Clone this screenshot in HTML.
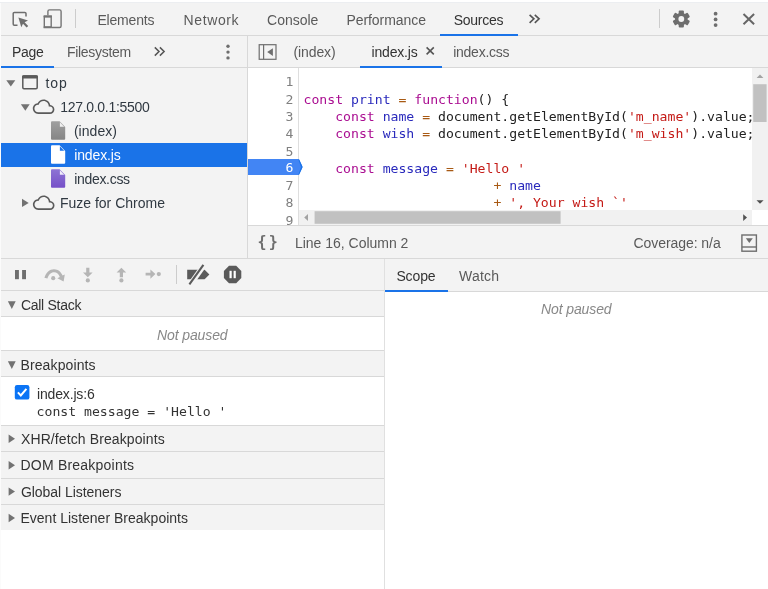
<!DOCTYPE html>
<html lang="en">
<head>
<meta charset="utf-8">
<title>DevTools - Sources</title>
<style>
html,body{margin:0;padding:0;}
body{width:768px;height:589px;position:relative;overflow:hidden;background:#fff;font-family:"Liberation Sans",sans-serif;font-size:14px;color:#333;}
.a{position:absolute;}
.bg{background:#f3f3f3;}
.t{position:absolute;white-space:nowrap;line-height:20px;height:20px;font-size:14px;}
.m{font-family:"DejaVu Sans Mono","Liberation Mono",monospace;}
.hl{position:absolute;left:0;height:1px;background:#d8d8d8;}
.vl{position:absolute;width:1px;background:#d8d8d8;}
svg{position:absolute;overflow:visible;}
.code{position:absolute;left:304.2px;white-space:pre;font-family:"DejaVu Sans Mono","Liberation Mono",monospace;font-size:13.15px;line-height:17px;height:17px;color:#222;}
.ln{position:absolute;left:248px;width:45.5px;text-align:right;font-family:"DejaVu Sans Mono","Liberation Mono",monospace;font-size:13.15px;line-height:17px;height:17px;color:#808080;}
.k{color:#aa0d91;}
.d{color:#2a2abc;}
.o{color:#a85a14;}
.s{color:#c41a16;}
</style>
</head>
<body>
<div id="root" style="position:absolute;left:0;top:0;width:768px;height:589px;will-change:transform;">
<!-- top toolbar -->
<div class="a bg" style="left:0;top:2px;width:768px;height:33px;"></div>
<div class="hl" style="top:35px;width:768px;"></div>
<!-- sources sub toolbar -->
<div class="a bg" style="left:0;top:36px;width:768px;height:31px;"></div>
<div class="hl" style="top:67px;width:768px;"></div>
<!-- navigator -->
<div class="a bg" style="left:0;top:68px;width:247px;height:190px;"></div>
<div class="vl" style="left:247px;top:36px;height:222px;"></div>
<!-- selected row -->
<div class="a" style="left:0;top:143px;width:247px;height:24px;background:#1a73e8;"></div>
<!-- editor -->
<div class="a" style="left:248px;top:68px;width:520px;height:158px;background:#fff;overflow:hidden;">
</div>

<div class="vl" style="left:298px;top:68px;height:158px;background:#dedede;"></div>
<div class="a" style="left:248px;top:68px;width:504px;height:142px;overflow:hidden;">
<svg style="left:0;top:91.2px;" width="56" height="16" viewBox="0 0 56 16"><path d="M0 0H50.2Q50.9 0 51.3 0.7L54.3 7.2Q54.6 8 54.3 8.8L51.3 15.3Q50.9 16 50.2 16H0Z" fill="#4285f4"/><path d="M50.2 0Q50.9 0 51.3 0.7L54.3 7.2Q54.6 8 54.3 8.8L51.3 15.3Q50.9 16 50.2 16L53 8Z" fill="#1a73e8"/></svg>
<div class="ln" style="left:0;top:5.35px;color:#808080;">1</div>
<div class="ln" style="left:0;top:22.65px;color:#808080;">2</div>
<div class="ln" style="left:0;top:39.95px;color:#808080;">3</div>
<div class="ln" style="left:0;top:57.25px;color:#808080;">4</div>
<div class="ln" style="left:0;top:74.55px;color:#808080;">5</div>
<div class="ln" style="left:0;top:90.75px;color:#fff;">6</div>
<div class="ln" style="left:0;top:109.15px;color:#808080;">7</div>
<div class="ln" style="left:0;top:126.45px;color:#808080;">8</div>
<div class="code" style="left:55.5px;top:22.65px;"><span class="k">const</span> <span class="d">print</span> <span class="o">=</span> <span class="k">function</span>() {</div>
<div class="code" style="left:55.5px;top:39.95px;">    <span class="k">const</span> <span class="d">name</span> <span class="o">=</span> document.getElementById(<span class="s">'m_name'</span>).value;</div>
<div class="code" style="left:55.5px;top:57.25px;">    <span class="k">const</span> <span class="d">wish</span> <span class="o">=</span> document.getElementById(<span class="s">'m_wish'</span>).value;</div>
<div class="code" style="left:55.5px;top:91.85px;">    <span class="k">const</span> <span class="d">message</span> <span class="o">=</span> <span class="s">'Hello '</span></div>
<div class="code" style="left:55.5px;top:109.15px;">                        <span class="o">+</span> <span class="d">name</span></div>
<div class="code" style="left:55.5px;top:126.45px;">                        <span class="o">+</span> <span class="s">', Your wish `'</span></div>
</div>
<div class="a" style="left:248px;top:68px;width:50px;height:157px;overflow:hidden;"><div class="ln" style="left:0;top:143.75px;">9</div></div>
<!-- status bar -->
<div class="a bg" style="left:248px;top:226px;width:520px;height:32px;"></div>
<div class="hl" style="left:248px;top:225px;width:520px;"></div>
<div class="hl" style="top:258px;width:768px;"></div>
<!-- debugger toolbar -->
<div class="a bg" style="left:0;top:259px;width:384px;height:31px;"></div>
<div class="hl" style="top:290px;width:384px;"></div>
<!-- call stack header -->
<div class="a bg" style="left:0;top:291px;width:384px;height:25px;"></div>
<div class="hl" style="top:316px;width:384px;"></div>
<div class="hl" style="top:350px;width:384px;"></div>
<div class="a bg" style="left:0;top:351px;width:384px;height:25px;"></div>
<div class="hl" style="top:376px;width:384px;"></div>
<div class="hl" style="top:425px;width:384px;"></div>
<div class="a bg" style="left:0;top:426px;width:384px;height:104.4px;"></div>
<div class="hl" style="top:451px;width:384px;"></div>
<div class="hl" style="top:478px;width:384px;"></div>
<div class="hl" style="top:504px;width:384px;"></div>

<!-- right pane -->
<div class="vl" style="left:384px;top:259px;height:330px;background:#e0e0e0;"></div>
<div class="a bg" style="left:385px;top:259px;width:383px;height:32px;"></div>
<div class="hl" style="left:385px;top:291px;width:383px;"></div>
<!-- tab underlines -->
<div class="a" style="left:440px;top:34px;width:78px;height:2px;background:#1a73e8;"></div>
<div class="a" style="left:0;top:66px;width:54px;height:2px;background:#1a73e8;"></div>
<div class="a" style="left:360px;top:66px;width:82px;height:2px;background:#1a73e8;"></div>
<div class="a" style="left:385px;top:290px;width:63px;height:2px;background:#1a73e8;"></div>
<div class="a" style="left:0;top:3px;width:1px;height:586px;background:#fbfbfb;"></div>
<div class="a" style="left:0;top:2px;width:768px;height:1px;background:#eceef1;"></div>
<!-- inspect icon -->
<svg style="left:0;top:0;" width="768" height="589" viewBox="0 0 768 589">
<g fill="none" stroke="#6e6e6e" stroke-width="1.5" stroke-linejoin="round">
<path d="M17.5 25.2H14.3Q13.2 25.2 13.2 24.1V13.6Q13.2 12.5 14.3 12.5H24.9Q26 12.5 26 13.6V16.5"/>
</g>
<path d="M18.4 17.6L28 20.6L24.6 22.3L28.2 25.9L26.6 27.4L23 23.8L21.3 27.2Z" fill="#6e6e6e"/>
<!-- device icon -->
<g fill="none" stroke="#757575">
<path d="M47.9 15.3V11.4Q47.9 9.9 49.4 9.9H59.6Q61.1 9.9 61.1 11.4V26Q61.1 27.5 59.6 27.5H52" stroke-width="1.4"/>
<rect x="44.3" y="16.8" width="6.9" height="10.2" stroke-width="1.4"/>
<path d="M43.6 16.3H51.9M43.6 27.4H51.9" stroke-width="1.9"/>
</g>
<!-- separators -->
<rect x="75" y="9" width="1" height="19" fill="#ccc"/>
<rect x="659" y="9" width="1" height="19" fill="#ccc"/>
<!-- top chevrons -->
<path d="M529.6 14.8L533.9 18.8L529.6 22.8M534.8 14.8L539.1 18.8L534.8 22.8" fill="none" stroke="#555" stroke-width="1.6"/>
<!-- gear -->
<g transform="translate(681.3 19)">
<g fill="#6e6e6e">
<rect x="-2.6" y="-8.6" width="5.2" height="17.2" rx="1"/>
<rect x="-2.6" y="-8.6" width="5.2" height="17.2" rx="1" transform="rotate(60)"/>
<rect x="-2.6" y="-8.6" width="5.2" height="17.2" rx="1" transform="rotate(120)"/>
<circle r="6.3"/>
</g>
<circle r="2.9" fill="#f3f3f3"/>
</g>
<!-- kebab top -->
<g fill="#6e6e6e">
<circle cx="715.6" cy="13.7" r="1.9"/><circle cx="715.6" cy="19.4" r="1.9"/><circle cx="715.6" cy="25.1" r="1.9"/>
<circle cx="228" cy="46.3" r="1.7"/><circle cx="228" cy="52.1" r="1.7"/><circle cx="228" cy="57.9" r="1.7"/>
</g>
<!-- close X -->
<path d="M743.5 14L754.1 24.2M754.1 14L743.5 24.2" stroke="#666" stroke-width="2" fill="none"/>
<!-- second row chevrons -->
<path d="M154.8 47.4L159 51.5L154.8 55.6M159.9 47.4L164.1 51.5L159.9 55.6" fill="none" stroke="#555" stroke-width="1.5"/>
<!-- sidebar toggle -->
<g fill="none" stroke="#6e6e6e" stroke-width="1.2">
<rect x="259.2" y="44.7" width="16.8" height="14.6"/>
<path d="M263.6 44.7V59.3"/>
</g>
<path d="M267.2 52.1L272.9 48.2V56Z" fill="#6e6e6e"/>
<!-- tab close -->
<path d="M426.6 47.4L433.8 54.3M433.8 47.4L426.6 54.3" stroke="#555" stroke-width="1.6" fill="none"/>
<!-- tree triangles -->
<g fill="#727272">
<path d="M6.3 80.2H15.3L10.8 86.6Z"/>
<path d="M20.9 104.3H29.7L25.3 110.8Z"/>
<path d="M22 198.7L28.7 202.9L22 207.1Z"/>
<path d="M7.9 301.3H15.7L11.8 309Z"/>
<path d="M7.9 361.3H15.7L11.8 369Z"/>
<path d="M8.6 434.6L15 438.8L8.6 443Z"/>
<path d="M8.6 461L15 465.2L8.6 469.4Z"/>
<path d="M8.6 487.4L15 491.6L8.6 495.8Z"/>
<path d="M8.6 513.8L15 518L8.6 522.2Z"/>
</g>
<!-- frame icon -->
<g>
<rect x="22.8" y="76" width="14.4" height="12.8" rx="1.2" fill="none" stroke="#5a5a5a" stroke-width="1.5"/>
<rect x="22.1" y="75.2" width="15.8" height="3.4" rx="1" fill="#5a5a5a"/>
</g>
<!-- clouds -->
<g fill="#5a5a5a">
<path id="cl" transform="translate(32.8 95.9) scale(0.9)" d="M19.35 10.04C18.67 6.59 15.64 4 12 4 9.11 4 6.6 5.64 5.35 8.04 2.34 8.36 0 10.91 0 14c0 3.31 2.69 6 6 6h13c2.76 0 5-2.24 5-5 0-2.64-2.05-4.78-4.65-4.96zM19 18.2H6c-2.32 0-4.2-1.88-4.2-4.2s1.88-4.2 4.2-4.2h.56C7.27 7.49 9.43 5.8 12 5.8c3.15 0 5.7 2.55 5.7 5.7v.3H19c1.77 0 3.2 1.43 3.2 3.2s-1.43 3.2-3.2 3.2z"/>
<path transform="translate(32.9 191.9) scale(0.9)" d="M19.35 10.04C18.67 6.59 15.64 4 12 4 9.11 4 6.6 5.64 5.35 8.04 2.34 8.36 0 10.91 0 14c0 3.31 2.69 6 6 6h13c2.76 0 5-2.24 5-5 0-2.64-2.05-4.78-4.65-4.96zM19 18.2H6c-2.32 0-4.2-1.88-4.2-4.2s1.88-4.2 4.2-4.2h.56C7.27 7.49 9.43 5.8 12 5.8c3.15 0 5.7 2.55 5.7 5.7v.3H19c1.77 0 3.2 1.43 3.2 3.2s-1.43 3.2-3.2 3.2z"/>
</g>
<!-- file icons -->
<defs>
<linearGradient id="gg" x1="0" y1="0" x2="0" y2="1"><stop offset="0" stop-color="#a0a0a0"/><stop offset="1" stop-color="#858585"/></linearGradient>
<linearGradient id="gp" x1="0" y1="0" x2="0" y2="1"><stop offset="0" stop-color="#8d74d4"/><stop offset="1" stop-color="#7650c8"/></linearGradient>
</defs>
<path d="M52 121.2H59.6L65.2 126.9V138.8Q65.2 139.8 64.2 139.8H52Q51 139.8 51 138.8V122.2Q51 121.2 52 121.2Z" fill="url(#gg)"/>
<path d="M59.9 122.3L64.2 126.7H59.9Z" fill="#f0f0f0"/>
<path d="M52 145.2H59.6L65.2 150.9V162.8Q65.2 163.8 64.2 163.8H52Q51 163.8 51 162.8V146.2Q51 145.2 52 145.2Z" fill="#fff"/>
<path d="M59.9 146.3L64.2 150.7H59.9Z" fill="#1a73e8"/>
<path d="M52 169.2H59.6L65.2 174.9V186.8Q65.2 187.8 64.2 187.8H52Q51 187.8 51 186.8V170.2Q51 169.2 52 169.2Z" fill="url(#gp)"/>
<path d="M59.9 170.3L64.2 174.7H59.9Z" fill="#f0ecfa"/>
<!-- debugger toolbar -->
<g fill="#6e6e6e">
<rect x="15" y="270" width="3.9" height="9.2"/><rect x="22.1" y="270" width="3.9" height="9.2"/>
</g>
<g fill="#b5b5b5">
<!-- step over -->
<path d="M44.4 277.8C46 272.6 49.6 269.2 54 269.2C58.2 269.2 61.2 272 62.6 275.6L64.8 274.6L63.6 281.4L57.4 278.2L59.8 277C58.8 274.2 56.8 272.2 54 272.2C51 272.2 48.6 274.6 47.4 278.6Z"/>
<circle cx="53.2" cy="278.2" r="2.1"/>
<!-- step into -->
<path d="M86.2 267.8H89.4V272.4H92.6L87.8 277.2L83 272.4H86.2Z"/>
<circle cx="87.8" cy="280.4" r="2.1"/>
<!-- step out -->
<path d="M119.8 277.2H123V272.6H126.2L121.4 267.8L116.6 272.6H119.8Z"/>
<circle cx="121.4" cy="280.4" r="2.1"/>
<!-- step -->
<path d="M145.6 272.7H150.4V269.4L155.4 274.1L150.4 278.8V275.5H145.6Z"/>
<circle cx="158.8" cy="274.1" r="2.1"/>
</g>
<rect x="176" y="265" width="1" height="19" fill="#ccc"/>
<!-- deactivate breakpoints -->
<path d="M187.2 269.8H204.6L209.4 274.5L204.6 279.2H187.2Z" fill="#5a5a5a"/>
<path d="M204.4 264.6L190.2 284.6" stroke="#f3f3f3" stroke-width="5.4"/>
<path d="M203.4 264.9L189.4 284.3" stroke="#5a5a5a" stroke-width="2.1"/>
<!-- pause on exceptions -->
<path d="M229 265.8H236.2L241.3 270.9V278.1L236.2 283.2H229L223.9 278.1V270.9Z" fill="#5a5a5a"/>
<rect x="229.5" y="270.8" width="2.2" height="7.4" fill="#fff"/><rect x="233.6" y="270.8" width="2.2" height="7.4" fill="#fff"/>
<!-- checkbox -->
<rect x="14.8" y="385" width="14.6" height="14.6" rx="2.2" fill="#0b74f5"/>
<path d="M17.9 392.4L20.8 395.4L26.4 388.9" fill="none" stroke="#fff" stroke-width="2"/>
<!-- coverage icon -->
<g fill="none" stroke="#6e6e6e" stroke-width="1.4">
<rect x="741.9" y="235" width="14.5" height="16.2"/>
<path d="M741.9 247H756.4"/>
</g>
<path d="M745.8 238.2H752.8L749.3 243Z" fill="#6e6e6e"/>
<!-- scrollbars -->
<rect x="752" y="68" width="16" height="142" fill="#f1f1f1"/>
<rect x="753.2" y="84.2" width="13.4" height="37.8" fill="#c1c1c1"/>
<path d="M756.6 78L760 74.5L763.4 78Z" fill="#a3a3a3"/>
<path d="M756.5 200.2H763.6L760 203.8Z" fill="#505050"/>
<rect x="299" y="210" width="453" height="15" fill="#f1f1f1"/>
<rect x="314.6" y="211.2" width="246" height="12.6" fill="#c1c1c1"/>
<path d="M308 214L304.2 217.5L308 221Z" fill="#a3a3a3"/>
<path d="M743.2 214.2L747 217.6L743.2 221Z" fill="#505050"/>
</svg>

<span class="t" style="left:97.38px;top:9.5px;color:#5a5a5a;letter-spacing:-0.17px;">Elements</span>
<span class="t" style="left:183.60px;top:9.5px;color:#5a5a5a;letter-spacing:0.61px;">Network</span>
<span class="t" style="left:267.11px;top:9.5px;color:#5a5a5a;letter-spacing:-0.03px;">Console</span>
<span class="t" style="left:346.47px;top:9.5px;color:#5a5a5a;letter-spacing:-0.07px;">Performance</span>
<span class="t" style="left:453.77px;top:9.5px;color:#333;letter-spacing:-0.27px;">Sources</span>
<span class="t" style="left:11.92px;top:41.9px;color:#333;letter-spacing:-0.30px;">Page</span>
<span class="t" style="left:66.92px;top:41.9px;color:#5a5a5a;letter-spacing:-0.29px;">Filesystem</span>
<span class="t" style="left:293.47px;top:41.9px;color:#5a5a5a;letter-spacing:-0.10px;">(index)</span>
<span class="t" style="left:371.50px;top:41.9px;color:#333;letter-spacing:-0.18px;">index.js</span>
<span class="t" style="left:453.15px;top:41.9px;color:#5a5a5a;letter-spacing:-0.24px;">index.css</span>
<span class="t" style="left:45.45px;top:73.1px;color:#303942;letter-spacing:0.93px;">top</span>
<span class="t" style="left:60.20px;top:97.1px;color:#303942;letter-spacing:-0.29px;">127.0.0.1:5500</span>
<span class="t" style="left:73.90px;top:121.1px;color:#303942;letter-spacing:0.05px;">(index)</span>
<span class="t" style="left:74.15px;top:144.9px;color:#fff;letter-spacing:-0.11px;">index.js</span>
<span class="t" style="left:74.15px;top:168.9px;color:#303942;letter-spacing:-0.30px;">index.css</span>
<span class="t" style="left:59.92px;top:193.1px;color:#303942;letter-spacing:0.00px;">Fuze for Chrome</span>
<span class="t" style="left:294.92px;top:232.9px;color:#5a5a5a;letter-spacing:-0.01px;">Line 16, Column 2</span>
<span class="t" style="left:633.44px;top:232.9px;color:#5a5a5a;letter-spacing:-0.06px;">Coverage: n/a</span>
<span class="t" style="left:20.96px;top:294.9px;color:#333;letter-spacing:-0.28px;">Call Stack</span>
<span class="t" style="left:157.10px;top:324.9px;color:#888;letter-spacing:-0.12px;font-style:italic;">Not paused</span>
<span class="t" style="left:20.46px;top:354.9px;color:#333;letter-spacing:0.12px;">Breakpoints</span>
<span class="t" style="left:36.94px;top:384.0px;color:#333;letter-spacing:-0.15px;">index.js:6</span>
<span class="t" style="left:21.02px;top:428.9px;color:#333;letter-spacing:0.10px;">XHR/fetch Breakpoints</span>
<span class="t" style="left:20.46px;top:455.4px;color:#333;letter-spacing:0.22px;">DOM Breakpoints</span>
<span class="t" style="left:20.98px;top:481.7px;color:#333;letter-spacing:-0.05px;">Global Listeners</span>
<span class="t" style="left:20.46px;top:508.1px;color:#333;letter-spacing:0.01px;">Event Listener Breakpoints</span>
<span class="t" style="left:396.38px;top:265.8px;color:#333;letter-spacing:-0.11px;">Scope</span>
<span class="t" style="left:459.07px;top:265.8px;color:#5a5a5a;letter-spacing:0.21px;">Watch</span>
<span class="t" style="left:541.10px;top:299.1px;color:#888;letter-spacing:-0.12px;font-style:italic;">Not paused</span>
<span class="t m" style="left:36.59px;top:401.8px;color:#333;letter-spacing:0.00px;font-size:13.15px;">const message = &#x27;Hello &#x27;</span>
<span class="t m" style="left:257.62px;top:232.1px;color:#6e6e6e;letter-spacing:2.05px;font-size:15px;font-weight:bold;">{}</span>
</div>
</body>
</html>
